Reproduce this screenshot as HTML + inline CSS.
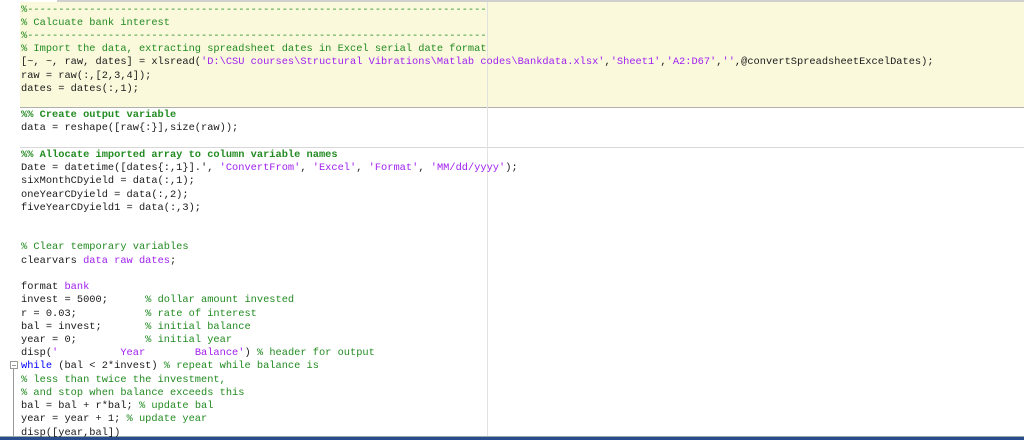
<!DOCTYPE html>
<html><head><meta charset="utf-8"><style>
html,body{margin:0;padding:0;background:#fff;width:1024px;height:442px;overflow:hidden;position:relative}
.yl{position:absolute;left:20px;top:2px;width:1004px;height:106px;background:#fbf9dc}
.ln{position:absolute;background:#c8c8c8}
#code{position:absolute;left:21px;top:3.5px;font-family:"Liberation Mono",monospace;font-size:10.35px;color:#1a1a1a;}
#code div{height:13.22px;line-height:13.22px;white-space:pre}
.c{color:#228b22}.s{color:#a020f0}.k{color:#0000ff}.b{font-weight:bold;color:#228b22}
</style></head><body>
<div class="yl"></div>
<div class="ln" style="left:57px;top:0;width:967px;height:2px;background:#cfcfcf"></div>
<div class="ln" style="left:20px;top:107px;width:1004px;height:1px;background:#b0b0b0"></div>
<div class="ln" style="left:20px;top:147px;width:1004px;height:1px;background:#d8d8d8"></div>
<div class="ln" style="left:487px;top:2px;width:1px;height:436px;background:#e2e2e2"></div>
<div style="position:absolute;left:10px;top:361px;width:6px;height:6px;border:1px solid #999;background:#fff"></div>
<div style="position:absolute;left:12px;top:365px;width:4px;height:1px;background:#999"></div>
<div class="ln" style="left:13px;top:369px;width:1px;height:68px;background:#999"></div>
<div class="ln" style="left:0;top:436px;width:1024px;height:1px;background:#9aa"></div>
<div class="ln" style="left:0;top:437px;width:1024px;height:3px;background:#2a4c8c"></div>
<div id="code">
<div class="c">%--------------------------------------------------------------------------</div>
<div class="c">% Calcuate bank interest</div>
<div class="c">%--------------------------------------------------------------------------</div>
<div class="c">% Import the data, extracting spreadsheet dates in Excel serial date format</div>
<div>[~, ~, raw, dates] = xlsread(<span class="s">'D:\CSU courses\Structural Vibrations\Matlab codes\Bankdata.xlsx'</span>,<span class="s">'Sheet1'</span>,<span class="s">'A2:D67'</span>,<span class="s">''</span>,@convertSpreadsheetExcelDates);</div>
<div>raw = raw(:,[2,3,4]);</div>
<div>dates = dates(:,1);</div>
<div> </div>
<div class="b">%% Create output variable</div>
<div>data = reshape([raw{:}],size(raw));</div>
<div> </div>
<div class="b">%% Allocate imported array to column variable names</div>
<div>Date = datetime([dates{:,1}].', <span class="s">'ConvertFrom'</span>, <span class="s">'Excel'</span>, <span class="s">'Format'</span>, <span class="s">'MM/dd/yyyy'</span>);</div>
<div>sixMonthCDyield = data(:,1);</div>
<div>oneYearCDyield = data(:,2);</div>
<div>fiveYearCDyield1 = data(:,3);</div>
<div> </div>
<div> </div>
<div class="c">% Clear temporary variables</div>
<div>clearvars <span class="s">data raw dates</span>;</div>
<div> </div>
<div>format <span class="s">bank</span></div>
<div>invest = 5000;      <span class="c">% dollar amount invested</span></div>
<div>r = 0.03;           <span class="c">% rate of interest</span></div>
<div>bal = invest;       <span class="c">% initial balance</span></div>
<div>year = 0;           <span class="c">% initial year</span></div>
<div>disp(<span class="s">'          Year        Balance'</span>) <span class="c">% header for output</span></div>
<div><span class="k">while</span> (bal &lt; 2*invest) <span class="c">% repeat while balance is</span></div>
<div class="c">% less than twice the investment,</div>
<div class="c">% and stop when balance exceeds this</div>
<div>bal = bal + r*bal; <span class="c">% update bal</span></div>
<div>year = year + 1; <span class="c">% update year</span></div>
<div>disp([year,bal])</div>
</div>
</body></html>
